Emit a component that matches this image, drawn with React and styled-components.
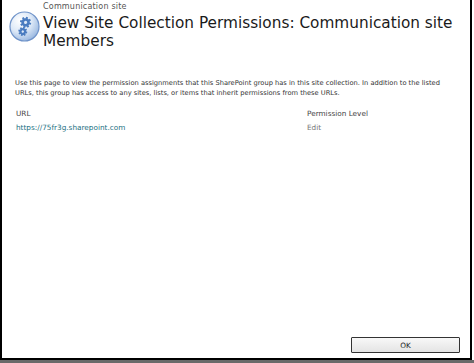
import React from "react";
import styled, { createGlobalStyle } from "styled-components";

const Global = createGlobalStyle`
  html, body { margin: 0; padding: 0; background: #fff; }
  body { width: 474px; height: 363px; overflow: hidden; }
`;

const Frame = styled.div`
  box-sizing: border-box;
  width: 472px;
  height: 360px;
  border-left: 2px solid #000;
  border-right: 2px solid #000;
  border-bottom: 2px solid #000;
  background: #fff;
  display: flex;
  flex-direction: column;
  font-family: "DejaVu Sans", Verdana, sans-serif;
`;

const Bottom = styled.div`
  width: 474px;
  height: 3px;
  background: #6a6a6a;
`;

const Header = styled.div`
  display: flex;
  align-items: flex-start;
  padding: 0 0 0 7px;
  gap: 3px;
`;

const IconWrap = styled.div`
  width: 31px;
  height: 31px;
  margin-top: 11px;
  flex: none;
`;

const TitleBlock = styled.div`
  display: flex;
  flex-direction: column;
`;

const Breadcrumb = styled.div`
  font-size: 8px;
  color: #555;
  line-height: 10px;
  height: 12px;
  margin-top: 2px;
  letter-spacing: 0.2px;
`;

const Title = styled.h1`
  margin: 0;
  font-weight: normal;
  font-size: 15.3px;
  line-height: 18px;
  color: #1a1a1a;
  white-space: nowrap;
`;

const Content = styled.div`
  padding: 28px 13px 0 13px;
  flex: 1;
  display: flex;
  flex-direction: column;
`;

const Description = styled.p`
  margin: 0;
  font-size: 6.7px;
  line-height: 10px;
  color: #333;
`;

const Table = styled.div`
  display: grid;
  grid-template-columns: 292px 1fr;
  margin-top: 10px;
  row-gap: 3px;
  font-size: 7.3px;
  line-height: 11px;
`;

const HeadCell = styled.div`
  color: #444;
  padding-left: ${(p) => (p.$first ? "1px" : "0")};
`;

const LinkCell = styled.a`
  color: #1c7283;
  text-decoration: none;
  padding-left: 1px;
`;

const LevelCell = styled.div`
  color: #777;
`;

const Footer = styled.div`
  display: flex;
  justify-content: flex-end;
  padding: 0 10px 5px 0;
`;

const OkButton = styled.button`
  box-sizing: border-box;
  width: 109px;
  height: 16px;
  border: 1px solid #333;
  background: linear-gradient(#f8f8f8, #e4e4e4);
  font-family: "DejaVu Sans", Verdana, sans-serif;
  font-size: 7.3px;
  color: #222;
  padding: 0;
  border-radius: 1px;
`;

function SiteIcon() {
  return (
    <svg width="31" height="31" viewBox="0 0 31 31">
      <defs>
        <radialGradient id="bg" cx="0.35" cy="0.3" r="0.8">
          <stop offset="0" stopColor="#ffffff" />
          <stop offset="0.5" stopColor="#dce8f7" />
          <stop offset="1" stopColor="#8fb0dc" />
        </radialGradient>
      </defs>
      <circle cx="15.5" cy="15.5" r="14.5" fill="url(#bg)" stroke="#6f93c9" strokeWidth="1.2" />
      <g fill="#4a7cc0" transform="rotate(-30 15.5 15.5)">
        <circle cx="18.5" cy="12.5" r="4.2" />
        <g transform="translate(18.5 12.5)">
          {[0, 45, 90, 135].map((a) => (
            <rect key={a} x="-1" y="-5.6" width="2" height="11.2" transform={`rotate(${a})`} />
          ))}
        </g>
        <circle cx="18.5" cy="12.5" r="1.6" fill="#dce8f7" />
        <circle cx="11.5" cy="19" r="3.3" />
        <g transform="translate(11.5 19)">
          {[0, 45, 90, 135].map((a) => (
            <rect key={a} x="-0.9" y="-4.5" width="1.8" height="9" transform={`rotate(${a})`} />
          ))}
        </g>
        <circle cx="11.5" cy="19" r="1.2" fill="#dce8f7" />
      </g>
    </svg>
  );
}

export default function App() {
  return (
    <>
      <Global />
      <Frame>
        <Header>
          <IconWrap>
            <SiteIcon />
          </IconWrap>
          <TitleBlock>
            <Breadcrumb>Communication site</Breadcrumb>
            <Title>
              View Site Collection Permissions: Communication site
              <br />
              Members
            </Title>
          </TitleBlock>
        </Header>
        <Content>
          <Description>
            Use this page to view the permission assignments that this SharePoint group has in this site collection. In addition to the listed URLs, this group has access to any sites, lists, or items that inherit permissions from these URLs.
          </Description>
          <Table>
            <HeadCell $first>URL</HeadCell>
            <HeadCell>Permission Level</HeadCell>
            <LinkCell href="#">https://75fr3g.sharepoint.com</LinkCell>
            <LevelCell>Edit</LevelCell>
          </Table>
        </Content>
        <Footer>
          <OkButton>OK</OkButton>
        </Footer>
      </Frame>
      <Bottom />
    </>
  );
}
